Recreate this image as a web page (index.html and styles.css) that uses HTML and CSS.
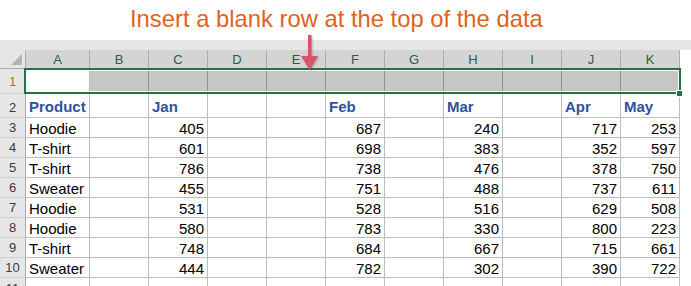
FILE: index.html
```html
<!DOCTYPE html>
<html lang="en">
<head>
  <meta charset="UTF-8">
  <meta name="viewport" content="width=device-width, initial-scale=1.0">
  <title>Insert a blank row at the top of the data</title>
  <link rel="stylesheet" href="styles.css">
</head>
<body>
  <div class="page">
    <!-- Caption above the sheet -->
    <div class="title">Insert a blank row at the top of the data</div>

    <div class="band"></div>
    <div class="sheet" id="sheet"></div>

    <!-- Selection box over row 1 -->
    <div class="selection"><span class="handle"></span></div>

    <!-- Pointer arrow -->
    <svg class="arrow" width="24" height="40" viewBox="0 0 24 40">
      <rect x="10" y="2" width="3.5" height="24" fill="#d9536b"/>
      <polygon points="3,23 20,23 11.7,37" fill="#d9536b"/>
    </svg>
  </div>

  <script>
    const columns = ["A", "B", "C", "D", "E", "F", "G", "H", "I", "J", "K"];

    // header row (row 2): column index -> label
    const headers = { 0: "Product", 2: "Jan", 5: "Feb", 7: "Mar", 9: "Apr", 10: "May" };

    // data rows: product, then values for C, F, H, J, K
    const data = [
      ["Hoodie", 405, 687, 240, 717, 253],
      ["T-shirt", 601, 698, 383, 352, 597],
      ["T-shirt", 786, 738, 476, 378, 750],
      ["Sweater", 455, 751, 488, 737, 611],
      ["Hoodie", 531, 528, 516, 629, 508],
      ["Hoodie", 580, 783, 330, 800, 223],
      ["T-shirt", 748, 684, 667, 715, 661],
      ["Sweater", 444, 782, 302, 390, 722]
    ];
    const valueCols = [2, 5, 7, 9, 10];

    const sheet = document.getElementById("sheet");

    function addCell(className, text) {
      const cell = document.createElement("div");
      cell.className = className;
      if (text !== undefined) cell.textContent = text;
      sheet.appendChild(cell);
      return cell;
    }

    // column headers
    const corner = addCell("corner");
    corner.innerHTML = '<svg width="26" height="19" viewBox="0 0 26 19"><polygon points="22,4 22,15 11,15" fill="#b4b4b4"/></svg>';
    columns.forEach(c => addCell("colhead", c));
    addCell("edge");

    // row 1 (blank, selected)
    addCell("rowhead active", "1");
    columns.forEach((c, i) => addCell(i === 0 ? "cell first" : "cell sel"));
    addCell("edge");

    // row 2 (headers)
    addCell("rowhead", "2");
    columns.forEach((c, i) => addCell("cell hdr", headers[i]));
    addCell("edge");

    // rows 3-10
    data.forEach((row, r) => {
      addCell("rowhead", String(r + 3));
      columns.forEach((c, i) => {
        if (i === 0) {
          addCell("cell", row[0]);
        } else {
          const k = valueCols.indexOf(i);
          addCell("cell num", k >= 0 ? row[k + 1] : undefined);
        }
      });
      addCell("edge");
    });

    // row 11 (cut off)
    addCell("rowhead last", "11");
    columns.forEach(() => addCell("cell blank"));
    addCell("edge");
  </script>
</body>
</html>
```

FILE: styles.css
```css
/* Basic styling */
body {
  margin: 0;
  background: #ffffff;
  overflow: hidden;
}
.page {
  position: relative;
  width: 691px;
  height: 286px;
  overflow: hidden;
}
.title {
  height: 40px;
  line-height: 38px;
  padding-left: 130px;
  font-family: "Liberation Sans", Arial, sans-serif;
  font-size: 23.8px;
  color: #e2621c;
  white-space: nowrap;
}
.band {
  height: 10px;
  background: #e6e6e6;
}

/* Sheet grid */
.sheet {
  display: grid;
  grid-template-columns: 26px 64px repeat(10, 59px) 1fr;
  grid-template-rows: 19px 25px 24px repeat(8, 20px) 20px;
  font-family: "Liberation Sans", Arial, sans-serif;
}
.corner {
  background: #e6e6e6;
  border-right: 1px solid #ababab;
  border-bottom: 1px solid #ababab;
  box-sizing: border-box;
}
.corner svg {
  display: block;
}
.colhead {
  display: flex;
  align-items: center;
  justify-content: center;
  background: #d4d4d4;
  border-right: 1px solid #ababab;
  border-bottom: 1px solid #ababab;
  box-sizing: border-box;
  font-size: 13px;
  color: #2e5a47;
}
.rowhead {
  display: flex;
  align-items: flex-end;
  justify-content: center;
  padding-bottom: 2px;
  background: #e6e6e6;
  border-right: 1px solid #ababab;
  border-bottom: 1px solid #cdcdcd;
  box-sizing: border-box;
  font-size: 13px;
  color: #3a3a3a;
}
.rowhead.active {
  color: #9b7a32;
  padding-bottom: 4px;
}
.rowhead.last {
  align-items: flex-start;
  padding-top: 3px;
}
.cell {
  display: flex;
  align-items: flex-end;
  padding: 0 3px;
  border-right: 1px solid #bcbcbc;
  border-bottom: 1px solid #bcbcbc;
  box-sizing: border-box;
  font-size: 15px;
  line-height: 17px;
  color: #000000;
  white-space: nowrap;
  overflow: hidden;
}
.cell.num {
  justify-content: flex-end;
}
.cell.hdr {
  padding-bottom: 2px;
  font-weight: bold;
  color: #2f51a0;
}
.cell.first {
  background: #ffffff;
}
.cell.sel {
  background: #c6c6c6;
  border-right-color: #8e8e8e;
}
.edge {
  background: #ffffff;
}

/* Selection overlay */
.selection {
  position: absolute;
  left: 24px;
  top: 68px;
  width: 657px;
  height: 26px;
  box-sizing: border-box;
  border: 2px solid #217346;
  box-shadow: inset 0 0 0 1px #ffffff;
}
.handle {
  position: absolute;
  left: 650px;
  top: 20px;
  width: 5px;
  height: 5px;
  background: #217346;
  border: 1px solid #ffffff;
}

/* Arrow */
.arrow {
  position: absolute;
  left: 298px;
  top: 33px;
  filter: drop-shadow(1px 1px 1px rgba(0, 0, 0, 0.25));
}
```
